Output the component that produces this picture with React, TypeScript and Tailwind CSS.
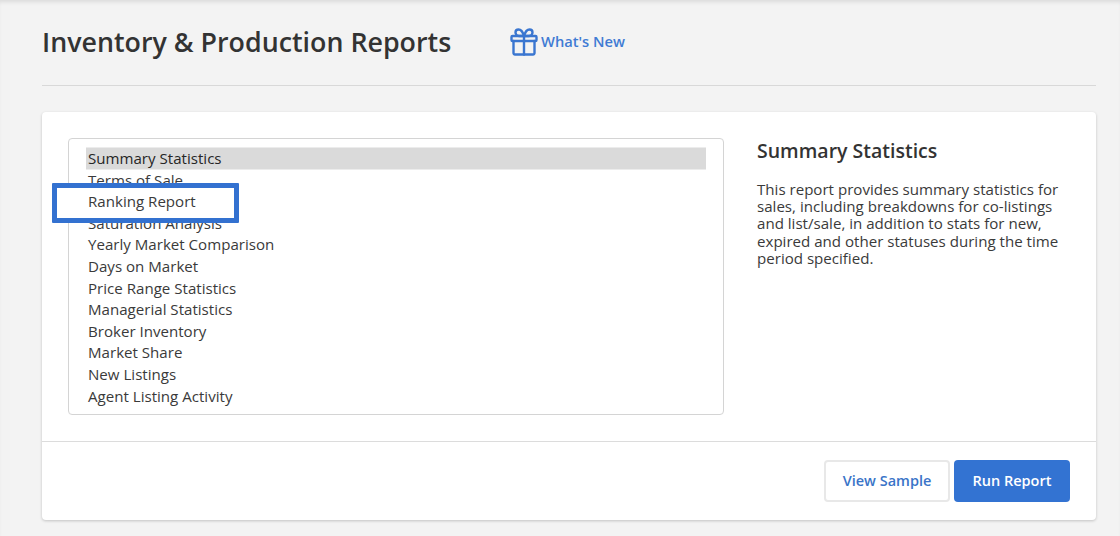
const reports = [
  'Summary Statistics',
  'Terms of Sale',
  'Ranking Report',
  'Saturation Analysis',
  'Yearly Market Comparison',
  'Days on Market',
  'Price Range Statistics',
  'Managerial Statistics',
  'Broker Inventory',
  'Market Share',
  'New Listings',
  'Agent Listing Activity',
]

function GiftIcon() {
  return (
    <svg width="28" height="28" viewBox="0 0 28 28" fill="none" stroke="#3a76d0" strokeWidth="2.4" strokeLinejoin="round" strokeLinecap="round">
      <rect x="1.500" y="8" width="25" height="5" rx="1" />
      <path d="M3.500 13v12a1.500 1.500 0 0 0 1.500 1.500h18a1.500 1.500 0 0 0 1.500-1.500V13" />
      <path d="M14 8v18.500" />
      <path d="M14 8c-1-3.500-3-6.500-5.500-6.500C6.500 1.500 5.500 3 5.500 4.500S6.800 8 9 8z" />
      <path d="M14 8c1-3.500 3-6.500 5.500-6.500 2 0 3 1.500 3 3S21.200 8 19 8z" />
    </svg>
  )
}

export default function App() {
  return (
    <div className="h-[536px] w-[1120px] overflow-hidden bg-[#f3f3f3] px-[42px] pr-[24px] font-['Open_Sans',sans-serif] text-[#333333] shadow-[inset_0_4px_4px_-2px_rgba(0,0,0,0.1)]">
      {/* header */}
      <div className="flex h-[86px] items-center border-b border-[#d8d8d8] pb-[2px]">
        <h1 className="w-[468px] pt-[1px] text-[26.800px] leading-none font-semibold whitespace-nowrap">Inventory &amp; Production Reports</h1>
        <a className="flex items-center gap-[3px] text-[14.700px] font-semibold text-[#3f7bd4]">
          <GiftIcon />
          What&apos;s New
        </a>
      </div>

      {/* card */}
      <div className="mt-[26px] h-[408px] rounded-[4px] bg-white shadow-[0_1px_3px_rgba(0,0,0,0.2)]">
        <div className="flex h-[330px] items-start border-b border-[#dcdcdc] pt-[26px] pl-[26px]">
          <div className="relative h-[277px] w-[656px] rounded-[4px] border border-[#d4d4d4] px-[17px] pt-[9px]">
            <ul className="-translate-y-[0.500px] text-[15.100px] leading-[21.600px] text-[#3a3a3a]">
              {reports.map((name, i) => (
                <li key={name} className={i === 0 ? 'bg-[#dadada] pl-[2px] text-[#262626]' : 'pl-[2px]'}>
                  {name}
                </li>
              ))}
            </ul>
            {/* highlight around Ranking Report */}
            <div className="absolute top-[44px] left-[-17px] flex h-[40px] w-[187px] items-center rounded-[1px] border-[5px] border-[#3371d0] bg-white pb-[3px] pl-[31px] text-[15.100px] text-[#3a3a3a]">
              Ranking Report
            </div>
          </div>
          <div className="ml-[33px] w-[316px]">
            <h2 className="text-[19.500px] leading-[26px] font-semibold">Summary Statistics</h2>
            <p className="mt-[17px] text-[15.100px] leading-[17.200px] text-[#3a3a3a]">
              This report provides summary statistics for sales, including breakdowns for co-listings and list/sale, in addition to stats for new, expired and other statuses during the time period specified.
            </p>
          </div>
        </div>
        <div className="flex justify-end gap-[4px] pt-[18px] pr-[26px]">
          <button className="h-[42px] w-[126px] rounded-[4px] border-2 border-[#e8e8e8] bg-white text-[14.500px] font-semibold text-[#3a74c8]">View Sample</button>
          <button className="h-[42px] w-[116px] rounded-[4px] bg-[#3373d2] text-[14.500px] font-semibold text-white">Run Report</button>
        </div>
      </div>
    </div>
  )
}
